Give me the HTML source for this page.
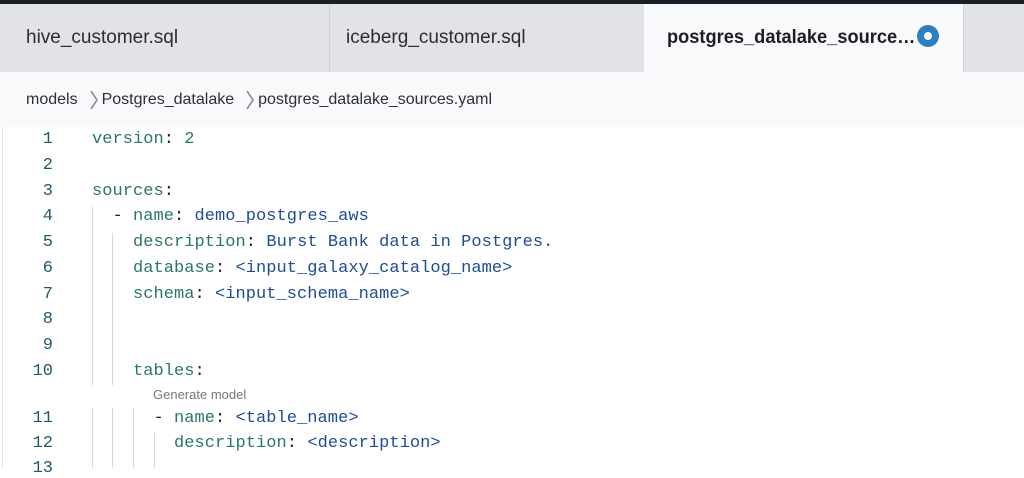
<!DOCTYPE html>
<html><head><style>
*{margin:0;padding:0;box-sizing:border-box}
body{width:1024px;height:468px;overflow:hidden;background:#fff;font-family:"Liberation Sans",sans-serif;position:relative}
.top{position:absolute;left:0;top:0;width:1024px;height:4px;background:#1b1e27}
.tabs{position:absolute;left:0;top:4px;width:1024px;height:68px;background:#e2e3e8}
.tab{position:absolute;top:0;height:68px;font-size:19px;color:#2a2d33;line-height:68px;padding-left:26px}
.sep{position:absolute;top:0;width:1px;height:68px;background:#cfd1d6}
.crumb{position:absolute;left:0;top:72px;width:1024px;height:55px;background:#f8f9fb;font-size:16px;color:#2d3036;line-height:55px;padding-left:26px}
.chev{display:inline-block;vertical-align:middle;margin:0 4px 0 12px}
.ed{position:absolute;left:2px;top:127px;width:1022px;height:341px;border-left:1px solid #e0e2e6}
.ln{position:absolute;left:0;width:53px;text-align:right;font-family:"Liberation Mono",monospace;font-size:17px;color:#1e5a6a}
.code{position:absolute;left:92px;font-family:"Liberation Mono",monospace;font-size:17px;white-space:pre;color:#222;letter-spacing:0.05px}
.k{color:#27786b}.v{color:#1d4b9c}
.g{position:absolute;width:1px;background:#d5d7db}
</style></head><body>
<div class="top"></div>
<div class="tabs">
<div class="tab" style="left:0">hive_customer.sql</div>
<div class="sep" style="left:329px"></div>
<div class="tab" style="left:320px;padding-left:26px">iceberg_customer.sql</div>
<div class="tab" style="left:644px;width:319px;background:#f8f9fb;padding-left:23px;color:#1c1e22;font-weight:bold"><span style="display:inline-block;transform:scaleX(0.96);transform-origin:left">postgres_datalake_source…</span></div>
<div class="sep" style="left:963px"></div>
<svg style="position:absolute;left:916px;top:20px" width="24" height="24"><circle cx="12" cy="12" r="11" fill="#2b7fc3"/><circle cx="12" cy="12" r="4" fill="#fff"/></svg>
</div>
<div class="crumb">models<svg class="chev" width="8" height="20"><path d="M1 1 L7 10 L1 19" stroke="#8a8e96" stroke-width="1.6" fill="none"/></svg>Postgres_datalake<svg class="chev" width="8" height="20"><path d="M1 1 L7 10 L1 19" stroke="#8a8e96" stroke-width="1.6" fill="none"/></svg>postgres_datalake_sources.yaml</div>
<div class="ed"></div>
<div class="g" style="left:92px;top:207px;height:58px"></div>
<div class="g" style="left:92px;top:255px;height:130px"></div>
<div class="g" style="left:112px;top:233px;height:152px"></div>
<div class="g" style="left:92px;top:408px;height:60px"></div>
<div class="g" style="left:112px;top:408px;height:60px"></div>
<div class="g" style="left:133px;top:408px;height:60px"></div>
<div class="g" style="left:154px;top:433px;height:35px"></div>
<div class="ln" style="top:130px">1</div><div class="code" style="top:130px"><span class="k">version</span>: <span class="k">2</span></div>
<div class="ln" style="top:156px">2</div>
<div class="ln" style="top:182px">3</div><div class="code" style="top:182px"><span class="k">sources</span>:</div>
<div class="ln" style="top:207px">4</div><div class="code" style="top:207px">  - <span class="k">name</span>: <span class="v">demo_postgres_aws</span></div>
<div class="ln" style="top:233px">5</div><div class="code" style="top:233px">    <span class="k">description</span>: <span class="v">Burst Bank data in Postgres.</span></div>
<div class="ln" style="top:259px">6</div><div class="code" style="top:259px">    <span class="k">database</span>: <span class="v">&lt;input_galaxy_catalog_name&gt;</span></div>
<div class="ln" style="top:285px">7</div><div class="code" style="top:285px">    <span class="k">schema</span>: <span class="v">&lt;input_schema_name&gt;</span></div>
<div class="ln" style="top:310px">8</div>
<div class="ln" style="top:336px">9</div>
<div class="ln" style="top:362px">10</div><div class="code" style="top:362px">    <span class="k">tables</span>:</div>
<div style="position:absolute;left:153px;top:387px;font-size:13px;color:#777">Generate model</div>
<div class="ln" style="top:409px">11</div><div class="code" style="top:409px">      - <span class="k">name</span>: <span class="v">&lt;table_name&gt;</span></div>
<div class="ln" style="top:434px">12</div><div class="code" style="top:434px">        <span class="k">description</span>: <span class="v">&lt;description&gt;</span></div>
<div class="ln" style="top:459px">13</div>
</body></html>
